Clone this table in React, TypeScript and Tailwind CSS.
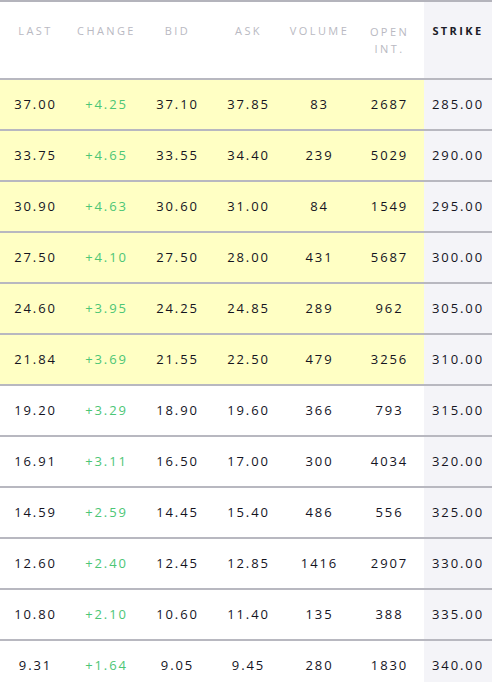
import React from "react";

const rows: [string, string, string, string, string, string, string, boolean][] = [
  ["37.00", "+4.25", "37.10", "37.85", "83", "2687", "285.00", true],
  ["33.75", "+4.65", "33.55", "34.40", "239", "5029", "290.00", true],
  ["30.90", "+4.63", "30.60", "31.00", "84", "1549", "295.00", true],
  ["27.50", "+4.10", "27.50", "28.00", "431", "5687", "300.00", true],
  ["24.60", "+3.95", "24.25", "24.85", "289", "962", "305.00", true],
  ["21.84", "+3.69", "21.55", "22.50", "479", "3256", "310.00", true],
  ["19.20", "+3.29", "18.90", "19.60", "366", "793", "315.00", false],
  ["16.91", "+3.11", "16.50", "17.00", "300", "4034", "320.00", false],
  ["14.59", "+2.59", "14.45", "15.40", "486", "556", "325.00", false],
  ["12.60", "+2.40", "12.45", "12.85", "1416", "2907", "330.00", false],
  ["10.80", "+2.10", "10.60", "11.40", "135", "388", "335.00", false],
  ["9.31", "+1.64", "9.05", "9.45", "280", "1830", "340.00", false],
];

const cols = "grid grid-cols-[71px_71px_71px_71px_71px_69px_68px]";

export default function App() {
  return (
    <div
      className="w-[492px] h-[682px] overflow-hidden bg-white border-t-2 border-[#b4b4bc]"
      style={{ fontFamily: '"Open Sans", "Noto Sans", sans-serif' }}
    >
      <div className={`${cols} h-[76px] text-[11px] tracking-[2.4px] text-[#b9b9c2]`}>
        <div className="flex justify-center pt-[21px]">LAST</div>
        <div className="flex justify-center pt-[21px]">CHANGE</div>
        <div className="flex justify-center pt-[21px]">BID</div>
        <div className="flex justify-center pt-[21px]">ASK</div>
        <div className="flex justify-center pt-[21px]">VOLUME</div>
        <div className="flex flex-col items-center pt-[21px] leading-[17px]">
          <span>OPEN</span>
          <span>INT.</span>
        </div>
        <div className="flex justify-center pt-[21px] bg-[#f4f4f8] text-[#1c1c28] font-bold">STRIKE</div>
      </div>
      {rows.map((r) => (
        <div
          key={r[6]}
          className={`${cols} h-[51px] border-t-2 border-[#b8b8c0] text-[13px] font-medium tracking-[1.9px] text-[#14141f]`}
        >
          {r.slice(0, 6).map((v, i) => (
            <div
              key={i}
              className={`flex items-center justify-center pt-[1px] ${r[7] ? "bg-[#ffffc4]" : ""} ${
                i === 1 ? "text-[#4cc676]" : ""
              }`}
            >
              {v as string}
            </div>
          ))}
          <div className="flex items-center justify-center pt-[1px] bg-[#f4f4f8]">{r[6]}</div>
        </div>
      ))}
    </div>
  );
}
